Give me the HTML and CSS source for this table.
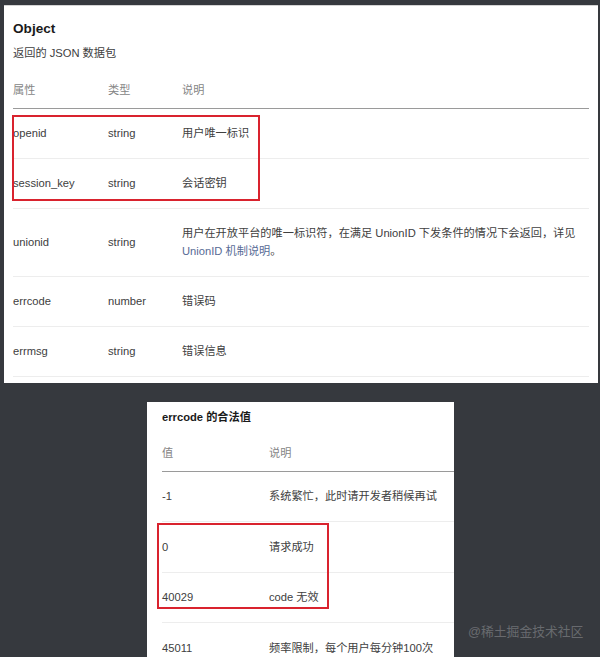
FILE: index.html
```html
<!DOCTYPE html>
<html lang="zh-CN">
<head>
<meta charset="utf-8">
<title>Object</title>
<link rel="stylesheet" href="styles.css">
</head>
<body>
<div class="canvas">
  <section class="panel panel-main">
    <h2 class="title">Object</h2>
    <p class="subtitle">返回的 JSON 数据包</p>
    <table class="tbl tbl-main">
      <colgroup><col class="c1"><col class="c2"><col class="c3"></colgroup>
      <thead>
        <tr><th>属性</th><th>类型</th><th>说明</th></tr>
      </thead>
      <tbody>
        <tr><td>openid</td><td>string</td><td>用户唯一标识</td></tr>
        <tr><td>session_key</td><td>string</td><td>会话密钥</td></tr>
        <tr><td>unionid</td><td>string</td><td>用户在开放平台的唯一标识符，在满足 UnionID 下发条件的情况下会返回，详见 <a class="link">UnionID 机制说明</a>。</td></tr>
        <tr><td>errcode</td><td>number</td><td>错误码</td></tr>
        <tr><td>errmsg</td><td>string</td><td>错误信息</td></tr>
      </tbody>
    </table>
    <div class="mark mark-main"></div>
  </section>

  <section class="panel panel-codes">
    <h3 class="title-sm">errcode 的合法值</h3>
    <table class="tbl tbl-codes">
      <colgroup><col class="k1"><col class="k2"></colgroup>
      <thead>
        <tr><th>值</th><th>说明</th></tr>
      </thead>
      <tbody>
        <tr><td>-1</td><td>系统繁忙，此时请开发者稍候再试</td></tr>
        <tr><td>0</td><td>请求成功</td></tr>
        <tr><td>40029</td><td>code 无效</td></tr>
        <tr><td>45011</td><td>频率限制，每个用户每分钟100次</td></tr>
      </tbody>
    </table>
    <div class="mark mark-codes"></div>
  </section>

  <div class="watermark">@稀土掘金技术社区</div>
</div>
</body>
</html>
```

FILE: styles.css
```css
* { box-sizing: border-box; }

html, body {
  margin: 0;
  padding: 0;
}

body {
  width: 600px;
  height: 657px;
  overflow: hidden;
  background: #36393e;
  font-family: "Liberation Sans", "Noto Sans CJK SC", sans-serif;
  color: #404040;
}

.canvas {
  position: relative;
  width: 600px;
  height: 657px;
  padding-top: 5px;
}

.panel {
  position: relative;
  background: #ffffff;
}

.panel-main {
  margin-left: 4px;
  width: 594px;
  height: 378px;
  padding: 13px 9px 0 9px;
  border-top: 1px solid #d4d4d4;
}

.title {
  margin: 0;
  font-size: 13.6px;
  line-height: 19px;
  font-weight: 700;
  color: #1a1a1a;
}

.subtitle {
  margin: 6px 0 0 0;
  font-size: 11.2px;
  line-height: 18px;
  color: #404040;
}

.tbl {
  border-collapse: collapse;
  table-layout: fixed;
  font-size: 11.2px;
}

.tbl th {
  font-weight: 400;
  text-align: left;
  color: #858585;
  height: 35px;
  padding: 0;
  line-height: 18px;
  vertical-align: middle;
  border-bottom: 1px solid #9a9a9a;
}

.tbl td {
  padding: 15.5px 0;
  line-height: 18px;
  vertical-align: middle;
  border-bottom: 1px solid #ededed;
  color: #404040;
}

.tbl-main {
  width: 576px;
  margin-top: 11px;
}

.c1 { width: 95px; }
.c2 { width: 74px; }

.link {
  color: #576b95;
  text-decoration: none;
}

.mark {
  position: absolute;
  border: 2px solid #d9232e;
  pointer-events: none;
}

.mark-main {
  left: 8px;
  top: 109px;
  width: 248px;
  height: 86px;
}

.panel-codes {
  margin-top: 19px;
  margin-left: 147px;
  width: 307px;
  height: 260px;
  padding: 6px 0 0 15px;
}

.title-sm {
  margin: 0;
  font-size: 11.2px;
  line-height: 18px;
  font-weight: 700;
  color: #1a1a1a;
}

.tbl-codes {
  width: 292px;
  margin-top: 10px;
}

.tbl-codes td {
  padding-top: 15.5px;
  padding-bottom: 16px;
}

.k1 { width: 107px; }

.mark-codes {
  left: 10px;
  top: 121px;
  width: 172px;
  height: 86px;
}

.watermark {
  position: absolute;
  left: 468px;
  top: 623px;
  font-size: 12.8px;
  line-height: 18px;
  color: rgba(255, 255, 255, 0.26);
  white-space: nowrap;
}
```
